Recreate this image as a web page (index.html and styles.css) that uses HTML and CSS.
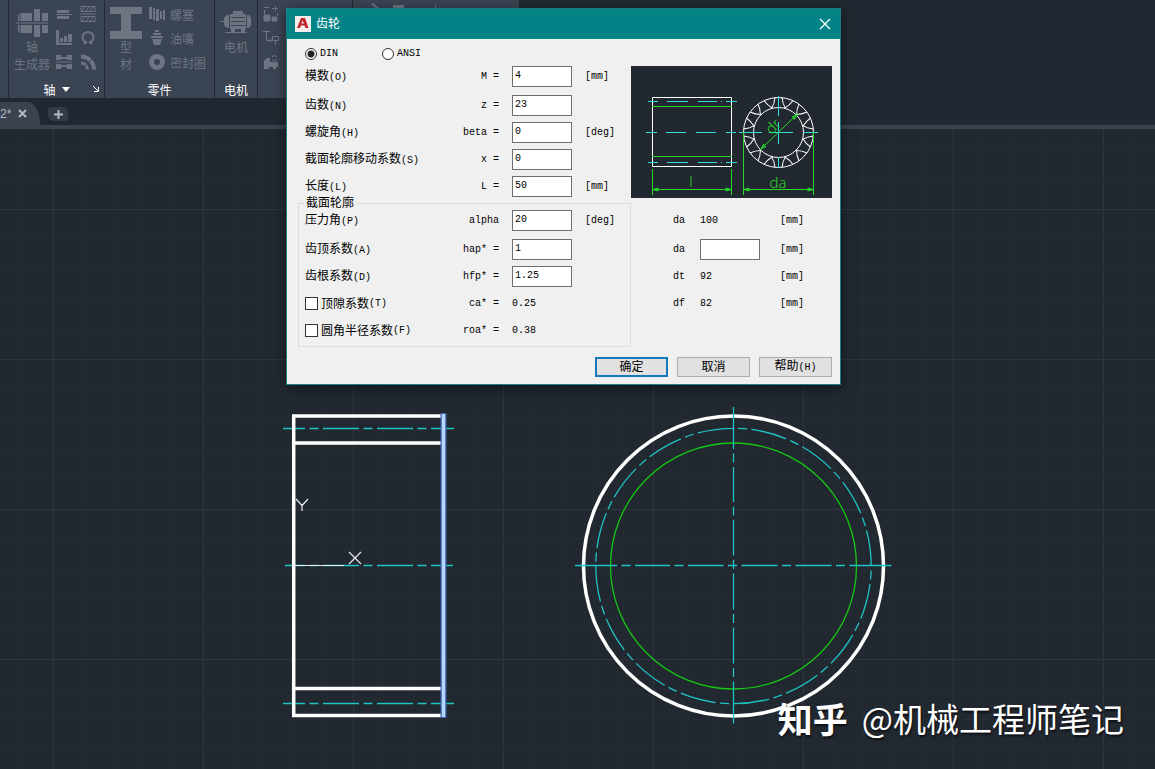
FILE: index.html
```
<!DOCTYPE html>
<html lang="zh-CN">
<head>
    <meta charset="UTF-8">
    <title>齿轮</title>
    <link rel="stylesheet" href="styles.css">
</head>
<body>
    <!-- 功能区 -->
    <header class="ribbon">
        <section class="panel panel-edge"></section>
        <section class="panel panel-shaft">
            <div class="panel-body">
                <button type="button" class="big-btn">
                    <svg width="32" height="30" viewBox="0 0 32 30" fill="currentColor">
                        <path d="M4 5h12v8H2V7zM18 1h6v12h-6zM26 5h6v8h-6zM2 17h14v8H4l-2-2zM18 17h6v12h-6zM26 17h6v8h-6z"/>
                        <path d="M0 14.5h32v1H0z"/>
                        <path d="M4 5v20" stroke="#3b4453" stroke-width="1"/>
                    </svg>
                    <span>轴<br>生成器</span>
                </button>
                <div class="icon-grid">
                    <button type="button" class="icon-btn" aria-label="轴段">
                        <svg width="16" height="16" viewBox="0 0 16 16" fill="currentColor"><path d="M1 4h12v3H1zM1 10h12v3H1zM0 8h16v1H0z"/></svg>
                    </button>
                    <button type="button" class="icon-btn" aria-label="轴承">
                        <svg width="16" height="16" viewBox="0 0 16 16" fill="none" stroke="currentColor"><path d="M1 .5h14v5H1zM1 10.5h14v5H1zM0 8h16M2 5l3-4M6 5l3-4M10 5l3-4M2 15l3-4M6 15l3-4M10 15l3-4"/></svg>
                    </button>
                    <button type="button" class="icon-btn" aria-label="计算">
                        <svg width="16" height="16" viewBox="0 0 16 16" fill="currentColor"><path d="M0 0h3v13h13v2H0zM4 8h3v4H4zM8 6h3v6H8zM12 4h4v8h-4z"/></svg>
                    </button>
                    <button type="button" class="icon-btn" aria-label="挡圈">
                        <svg width="16" height="16" viewBox="0 0 16 16" fill="none" stroke="currentColor" stroke-width="2"><path d="M4 14l2-1.5A5.5 5.5 0 1 1 10 12.5l2 1.5"/></svg>
                    </button>
                    <button type="button" class="icon-btn" aria-label="键槽">
                        <svg width="16" height="16" viewBox="0 0 16 16" fill="currentColor"><path d="M0 1h5v2h6V1h5v5h-5V5H5v1H0zM0 10h5v1h6v-1h5v5h-5v-2H5v2H0zM0 7.5h16v1H0z"/></svg>
                    </button>
                    <button type="button" class="icon-btn" aria-label="密封">
                        <svg width="16" height="16" viewBox="0 0 16 16" fill="none" stroke="currentColor"><path d="M1 2.5A13 13 0 0 1 14 15.5" stroke-width="4"/><path d="M1 9a6.5 6.5 0 0 1 6.5 6.5" stroke-width="3"/><path d="M2 15L14 3" stroke="#3b4453"/></svg>
                    </button>
                </div>
            </div>
            <h2 class="panel-title">轴
                <svg width="8" height="5" viewBox="0 0 8 5" fill="currentColor"><path d="M0 0h8L4 5z"/></svg>
                <svg class="launcher" width="6" height="6" viewBox="0 0 6 6" fill="none" stroke="currentColor"><path d="M0 0l5 5M5.5 1v4.5H1"/></svg>
            </h2>
        </section>
        <section class="panel panel-parts">
            <div class="panel-body">
                <button type="button" class="big-btn">
                    <svg width="32" height="32" viewBox="0 0 32 32" fill="currentColor"><path d="M0 0h32v7H21v17h11v8H0v-8h11V7H0z"/></svg>
                    <span>型<br>材</span>
                </button>
                <div class="icon-list">
                    <button type="button" class="list-btn">
                        <svg width="18" height="16" viewBox="0 0 18 16" fill="currentColor"><path d="M1 1h3v12H1zM5 2h2v12H5zM8 3h3v12H8zM12 5h2v8h-2zM15 4h2v10h-2z"/></svg>
                        螺塞
                    </button>
                    <button type="button" class="list-btn">
                        <svg width="18" height="16" viewBox="0 0 18 16" fill="currentColor"><path d="M7 0h4v2H7zM5 3h8v2H5zM3 6h12v2H3zM4 9h10l-2 6H6z"/></svg>
                        油嘴
                    </button>
                    <button type="button" class="list-btn">
                        <svg width="18" height="16" viewBox="0 0 18 16" fill="none" stroke="currentColor" stroke-width="5"><circle cx="9" cy="8" r="5.5"/></svg>
                        密封圈
                    </button>
                </div>
            </div>
            <h2 class="panel-title">零件</h2>
        </section>
        <section class="panel panel-motor">
            <div class="panel-body">
                <button type="button" class="big-btn">
                    <svg width="32" height="30" viewBox="0 0 32 30" fill="currentColor">
                        <path d="M7 7h2v13H7l-3-3v-7zM10 6h16v15H10zM27 7h2l2 3v7l-2 3h-2zM13 3h10v3H13zM0 13h4v1H0zM11 21h4v3h-4zM21 21h4v3h-4zM5 24h22v1H5z"/>
                        <path d="M11 9.5h14M11 13.5h14M11 17.5h14" stroke="#3b4453"/>
                    </svg>
                    <span>电机</span>
                </button>
            </div>
            <h2 class="panel-title">电机</h2>
        </section>
        <section class="panel panel-tools">
            <div class="panel-body">
                <div class="icon-list">
                    <button type="button" class="icon-btn" aria-label="装配">
                        <svg width="16" height="16" viewBox="0 0 16 16" fill="none" stroke="currentColor"><path d="M1 1.5h5M1.500 4v4M9 2.500h6M12.5 0v5M14.5 7v3"/><path d="M1 9h6v6H1zM9 11h5v4H9z" fill="currentColor"/></svg>
                    </button>
                    <button type="button" class="icon-btn" aria-label="替换">
                        <svg width="16" height="16" viewBox="0 0 16 16" fill="none" stroke="currentColor"><path d="M0 1.5h7M3.5 1v9M3.5 10.5h5M7 8.5l2 2-2 2M9.5 6.5h6v4h-6zM12.5 10v5"/></svg>
                    </button>
                    <button type="button" class="icon-btn" aria-label="更新">
                        <svg width="16" height="16" viewBox="0 0 16 16" fill="currentColor"><path d="M1 7l3-3h3v4h8v5h-2v2h-3v-2H6v2H1z"/><path d="M9 3a3 3 0 0 1 5 0M14 5a3 3 0 0 1-5 1" fill="none" stroke="currentColor"/></svg>
                    </button>
                </div>
            </div>
        </section>
        <section class="panel panel-more">
            <svg width="100" height="12" viewBox="0 0 100 12" fill="currentColor"><path d="M2 3l6 5H5L0 4zM22 5h11v6H22zM64 5h1v5h-1z"/></svg>
        </section>
    </header>

    <!-- 文件标签 -->
    <nav class="tabs">
        <div class="tab">2*
            <button type="button" class="tab-close" aria-label="关闭"><svg width="9" height="9" viewBox="0 0 9 9" stroke="currentColor" stroke-width="2"><path d="M1 1l7 7M8 1L1 8"/></svg></button>
        </div>
        <button type="button" class="tab-add" aria-label="新建"><svg width="9" height="9" viewBox="0 0 9 9" stroke="currentColor" stroke-width="2"><path d="M4.500 0v9M0 4.500h9"/></svg></button>
    </nav>

    <!-- 绘图区 -->
    <main class="canvas">
        <svg class="drawing" fill="none">
            <g transform="translate(0 -129)">
                <g class="center-line">
                    <path d="M283 428.5h171" stroke-dasharray="36 4.5 9 4.5" stroke-dashoffset="14"/>
                    <path d="M285 565.5h168" stroke-dasharray="36 4.5 9 4.5" stroke-dashoffset="16"/>
                    <path d="M283 703.5h171" stroke-dasharray="36 4.5 9 4.5" stroke-dashoffset="14"/>
                </g>
                <path class="outline" d="M443 416H293.7V715.5H443M293 443H443M293 688.5H443"/>
                <path class="glow" d="M443.5 413v305"/>
                <path class="picked" d="M443.5 414v303"/>
                <path class="ucs" d="M295 565.5h49M296 499l6 6.5 6-6.5M302 505.5v5.5M349 552l12 12M361 552l-12 12"/>
                <circle class="outline" cx="733.5" cy="566" r="150"/>
                <circle class="center-line" cx="733.5" cy="566" r="137.7" pathLength="864" stroke-dasharray="36 4.5 9 4.5" stroke-dashoffset="36"/>
                <circle class="root" cx="733.5" cy="566" r="123"/>
                <g class="center-line" stroke-dasharray="42 4.5 9 4.5 35 4.5 9 4.5 35.5 4.5 9 4.5 36 4.5 9 4.5 36 4.5 9 4.5 42">
                    <path d="M575 565.5h318"/>
                    <path d="M733.5 407v318"/>
                </g>
            </g>
        </svg>
        <div class="watermark"><strong>知乎</strong><span>@机械工程师笔记</span></div>
    </main>

    <!-- 齿轮对话框 -->
    <div class="dialog" role="dialog" aria-labelledby="dlg-title">
        <div class="title-bar">
            <svg width="16" height="16" viewBox="0 0 16 16"><path fill="#f4eeee" d="M0 0h16v16H0z"/><path fill="#c1272d" fill-rule="evenodd" d="M6 2h4l3.5 10H10.5l-1-2.5H6L5 12H2zM7.5 4.5L6.5 7.5h2.5z"/></svg>
            <h1 id="dlg-title">齿轮</h1>
            <button type="button" class="close" aria-label="关闭"><svg width="12" height="12" viewBox="0 0 12 12" stroke="#fff" stroke-width="1.3"><path d="M1 1l10 10M11 1L1 11"/></svg></button>
        </div>
        <form class="dialog-body">
            <div class="standard">
                <label><input type="radio" name="standard" checked><span class="mono">DIN</span></label>
                <label><input type="radio" name="standard"><span class="mono">ANSI</span></label>
            </div>
            <div class="columns">
                <div class="params">
                    <div class="rows">
                        <div class="row"><label for="m">模数<span class="mono">(O)</span></label><span class="mono sym">M =</span><input type="text" id="m" value="4"><span class="mono">[mm]</span></div>
                        <div class="row"><label for="z">齿数<span class="mono">(N)</span></label><span class="mono sym">z =</span><input type="text" id="z" value="23"></div>
                        <div class="row"><label for="beta">螺旋角<span class="mono">(H)</span></label><span class="mono sym">beta =</span><input type="text" id="beta" value="0"><span class="mono">[deg]</span></div>
                        <div class="row"><label for="x">截面轮廓移动系数<span class="mono">(S)</span></label><span class="mono sym">x =</span><input type="text" id="x" value="0"></div>
                        <div class="row"><label for="l">长度<span class="mono">(L)</span></label><span class="mono sym">L =</span><input type="text" id="l" value="50"><span class="mono">[mm]</span></div>
                    </div>
                    <fieldset class="rows profile">
                        <legend>截面轮廓</legend>
                        <div class="row"><label for="alpha">压力角<span class="mono">(P)</span></label><span class="mono sym">alpha</span><input type="text" id="alpha" value="20"><span class="mono">[deg]</span></div>
                        <div class="row"><label for="hap">齿顶系数<span class="mono">(A)</span></label><span class="mono sym">hap* =</span><input type="text" id="hap" value="1"></div>
                        <div class="row"><label for="hfp">齿根系数<span class="mono">(D)</span></label><span class="mono sym">hfp* =</span><input type="text" id="hfp" value="1.25"></div>
                        <div class="row"><label class="check"><input type="checkbox">顶隙系数<span class="mono">(T)</span></label><span class="mono sym">ca* =</span><output class="mono">0.25</output></div>
                        <div class="row"><label class="check"><input type="checkbox">圆角半径系数<span class="mono">(F)</span></label><span class="mono sym">roa* =</span><output class="mono">0.38</output></div>
                    </fieldset>
                </div>
                <div class="results">
                    <svg class="preview" width="201" height="132" viewBox="0 0 201 132" fill="none">
                        <defs>
                            <path id="tooth" d="M-3.5-35Q-4-29-7-24M3.5-35Q4-29 7-24"/>
                            <path id="arrow" d="M0 0l5-1.5v3z"/>
                        </defs>
                        <g stroke="#fff">
                            <path d="M21.5 31.5h79v69h-79z"/>
                            <g transform="translate(147.5 66.5)">
                                <circle r="35"/><circle r="25"/>
                                <use href="#tooth"/><use href="#tooth" transform="rotate(30)"/><use href="#tooth" transform="rotate(60)"/>
                                <use href="#tooth" transform="rotate(90)"/><use href="#tooth" transform="rotate(120)"/><use href="#tooth" transform="rotate(150)"/>
                                <use href="#tooth" transform="rotate(180)"/><use href="#tooth" transform="rotate(210)"/><use href="#tooth" transform="rotate(240)"/>
                                <use href="#tooth" transform="rotate(270)"/><use href="#tooth" transform="rotate(300)"/><use href="#tooth" transform="rotate(330)"/>
                            </g>
                        </g>
                        <path stroke="#35dcdc" d="M17 35.5h10M36 35.5h21M67 35.5h19M90 35.5h1M95 35.5h11M17 96.5h10M36 96.5h21M67 96.5h19M90 96.5h1M95 96.5h11M15 66.5h11M35 66.5h20M65 66.5h20M95 66.5h10M108 66.5h23M138 66.5h24M172 66.5h15M147.5 30v20M147.5 56v22M147.5 91v11"/>
                        <g stroke="#2bd52b">
                            <path d="M21 40.5h80M21 90.5h80M21.5 103v26M100.5 103v26M21 123.5h80M112.5 66v63M182.5 66v63M112 123.5h71M130 83l36-34.5"/>
                            <use href="#arrow" x="22" y="123.5"/><use href="#arrow" transform="translate(100 123.5) rotate(180)"/>
                            <use href="#arrow" x="113" y="123.5"/><use href="#arrow" transform="translate(182 123.5) rotate(180)"/>
                            <use href="#arrow" transform="translate(130 83) rotate(-44)"/><use href="#arrow" transform="translate(166 48.5) rotate(136)"/>
                        </g>
                        <g class="dims">
                            <text x="60" y="121">l</text>
                            <text x="147" y="122">da</text>
                            <text transform="translate(146 64) rotate(-46)">dr</text>
                        </g>
                    </svg>
                    <div class="rows">
                        <div class="row"><span class="mono">da</span><output class="mono">100</output><span class="mono">[mm]</span></div>
                        <div class="row"><label for="da" class="mono">da</label><input type="text" id="da"><span class="mono">[mm]</span></div>
                        <div class="row"><span class="mono">dt</span><output class="mono">92</output><span class="mono">[mm]</span></div>
                        <div class="row"><span class="mono">df</span><output class="mono">82</output><span class="mono">[mm]</span></div>
                    </div>
                </div>
            </div>
            <div class="actions">
                <button type="button" class="primary">确定</button>
                <button type="button">取消</button>
                <button type="button">帮助<span class="mono">(H)</span></button>
            </div>
        </form>
    </div>
</body>
</html>
```
FILE: styles.css
```
* {
    box-sizing: border-box;
}

body {
    display: flex;
    flex-direction: column;
    min-height: 100vh;
    margin: 0;
    overflow: hidden;
    position: relative;
    background: #222831;
    font-family: "Liberation Sans", "Noto Sans CJK SC", sans-serif;
    font-size: 12px;
}

button {
    margin: 0;
    padding: 0;
    border: none;
    background: none;
    color: inherit;
    font: inherit;
}

svg {
    display: block;
    flex: none;
}

/* 功能区 */
.ribbon {
    display: flex;
    align-self: flex-start;
    height: 98px;
    background: #3b4453;
    color: #6d7582;
}

.panel {
    display: flex;
    flex-direction: column;
    border-right: 1px solid #222935;
}

.panel-edge {
    width: 9px;
}

.panel-shaft {
    width: 96px;
}

.panel-parts {
    width: 110px;
}

.panel-motor {
    width: 43px;
}

.panel-tools {
    width: 95px;
}

.panel-more {
    width: 166px;
    padding-left: 18px;
    border: none;
}

.panel-body {
    display: flex;
    flex: 1;
    gap: 6px;
    padding: 6px 5px 0;
}

.panel-motor .panel-body {
    justify-content: center;
}

.big-btn {
    display: flex;
    flex-direction: column;
    align-items: center;
    justify-content: flex-start;
    min-width: 32px;
    line-height: 17px;
    white-space: nowrap;
}

.big-btn svg {
    height: 34px;
}

.icon-grid {
    display: grid;
    grid-template-rows: repeat(3, 16px);
    grid-template-columns: repeat(2, 16px);
    gap: 8px;
}

.icon-list {
    display: flex;
    flex-direction: column;
    gap: 8px;
}

.list-btn {
    display: flex;
    align-items: center;
    gap: 4px;
    height: 16px;
    white-space: nowrap;
}

.panel-title {
    display: flex;
    align-items: center;
    justify-content: center;
    gap: 6px;
    position: relative;
    height: 18px;
    margin: 0;
    color: #fff;
    font-size: 12px;
    font-weight: normal;
}

.launcher {
    position: absolute;
    right: 5px;
    bottom: 6px;
}

/* 文件标签 */
.tabs {
    display: flex;
    align-items: flex-end;
    gap: 8px;
    height: 31px;
    border-bottom: 4px solid #3b4351;
    color: #b4bac3;
}

.tab {
    display: flex;
    align-items: center;
    gap: 7px;
    height: 23px;
    padding-right: 13px;
    border-top-right-radius: 12px 23px;
    background: #3b4351;
}

.tab-add {
    display: flex;
    align-items: center;
    justify-content: center;
    width: 20px;
    height: 14px;
    margin-bottom: 4px;
    border-radius: 3px 6px 3px 6px;
    background: #343b48;
}

/* 绘图区 */
.canvas {
    flex: 1;
    position: relative;
    background-color: #212830;
    background-image:
        linear-gradient(90deg, #2e3541 1px, transparent 1px),
        linear-gradient(#2e3541 1px, transparent 1px),
        linear-gradient(90deg, #252c35 1px, transparent 1px),
        linear-gradient(#252c35 1px, transparent 1px);
    background-size: 150px 150px, 150px 150px, 30px 30px, 30px 30px;
    background-position: 53px 80px, 53px 80px, 23px 20px, 23px 20px;
}

.drawing {
    position: absolute;
    left: 0;
    top: 0;
    width: 100%;
    height: 100%;
}

.outline {
    stroke: #fff;
    stroke-width: 3.5;
}

.center-line {
    stroke: #1fc4c4;
    stroke-width: 1.3;
}

.root {
    stroke: #14c814;
    stroke-width: 1.3;
}

.glow {
    stroke: #3c63ad;
    stroke-width: 6;
}

.picked {
    stroke: #b5d6ff;
    stroke-width: 3.5;
}

.ucs {
    stroke: #e8eaec;
    stroke-width: 1.2;
}

.watermark {
    display: flex;
    align-items: center;
    gap: 14px;
    position: absolute;
    right: 31px;
    bottom: 27px;
    color: #fff;
    font-family: "Noto Sans CJK SC", sans-serif;
    font-size: 33px;
    line-height: 48px;
    text-shadow: 1px 2px 2px rgba(0, 0, 0, 0.6);
}

.watermark strong {
    font-size: 35px;
}

/* 对话框 */
.dialog {
    position: absolute;
    left: 286px;
    top: 8px;
    border: 1px solid #1b7f83;
    background: #f0f0f0;
    color: #000;
    line-height: 16px;
    box-shadow: 0 3px 12px rgba(0, 0, 0, 0.5);
}

.title-bar {
    display: flex;
    align-items: center;
    gap: 5px;
    height: 30px;
    padding: 0 9px 0 8px;
    background: #048387;
    color: #fff;
}

.title-bar h1 {
    margin: 0;
    font-size: 12px;
    font-weight: normal;
}

.close {
    margin-left: auto;
}

.dialog-body {
    padding: 7px 8px 7px 11px;
}

.mono {
    font-family: "Liberation Mono", monospace;
    font-size: 10px;
}

.standard {
    display: flex;
    gap: 44px;
    padding-left: 7px;
}

.standard label {
    display: flex;
    align-items: center;
    gap: 3px;
}

input[type="radio"] {
    appearance: none;
    width: 12px;
    height: 12px;
    margin: 0;
    border: 1px solid #333;
    border-radius: 50%;
    background: #fff;
}

input[type="radio"]:checked {
    background: radial-gradient(circle, #222 3px, #fff 4px);
}

.columns {
    display: flex;
}

.params {
    padding-top: 4px;
}

.rows {
    display: flex;
    flex-direction: column;
    gap: 6px;
}

.row {
    display: grid;
    grid-template-columns: 117px 64px 60px auto;
    column-gap: 13px;
    align-items: center;
    height: 21px;
    padding-left: 7px;
}

.row:first-of-type {
    margin-bottom: 2px;
}

.row label {
    white-space: nowrap;
}

.row .sym {
    text-align: right;
}

.row input[type="text"] {
    width: 60px;
    height: 21px;
    padding: 0 2px 2px;
    border: 1px solid #6e6e6e;
    background: #fff;
    font-family: "Liberation Mono", monospace;
    font-size: 10px;
}

.profile {
    min-width: 333px;
    margin: 0;
    padding: 0 0 5px;
    border: 1px solid #dcdcdc;
}

.profile .row {
    padding-left: 6px;
}

.profile legend {
    margin-left: 5px;
    padding: 0 2px;
    line-height: 13px;
}

.check {
    display: flex;
    align-items: center;
}

.check input {
    appearance: none;
    width: 13px;
    height: 13px;
    margin: 0 3px 0 0;
    border: 1px solid #333;
    background: #fff;
}

.preview {
    margin: 4px 0 12px;
    background: #212830;
}

.dims {
    fill: #2bd52b;
    font-family: "Noto Sans", sans-serif;
    font-size: 15px;
    font-weight: 300;
    text-anchor: middle;
}

.results .row {
    grid-template-columns: 14px 67px auto;
    padding-left: 42px;
}

.results .rows {
    width: 200px;
}

.actions {
    display: flex;
    justify-content: flex-end;
    gap: 9px;
    margin-top: 10px;
}

.actions button {
    width: 73px;
    height: 20px;
    border: 1px solid #adadad;
    background: #e1e1e1;
    line-height: 16px;
}

.actions .primary {
    border: 2px solid #1579bd;
}
```
